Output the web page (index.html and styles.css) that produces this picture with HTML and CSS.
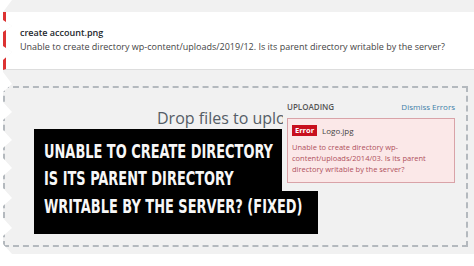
FILE: index.html
```html
<!DOCTYPE html>
<html lang="en">
<head>
    <meta charset="UTF-8">
    <meta name="viewport" content="width=device-width, initial-scale=1.0">
    <title>Unable to create directory</title>
    <link rel="stylesheet" href="styles.css">
</head>
<body>
    <div class="screen">
        <div class="topbar"></div>

        <div class="notice">
            <p class="notice-file">create account.png</p>
            <p class="notice-msg">Unable to create directory wp-content/uploads/2019/12. Is its parent directory writable by the server?</p>
        </div>

        <div class="uploader">
            <div class="drop">
                <p class="drop-text">Drop files to upload</p>

                <div class="upload-status">
                    <div class="status-head">
                        <span class="status-title">UPLOADING</span>
                        <a class="dismiss" href="#">Dismiss Errors</a>
                    </div>
                    <div class="upload-error">
                        <div class="error-row">
                            <span class="badge">Error</span>
                            <span class="filename">Logo.jpg</span>
                        </div>
                        <p class="error-msg">Unable to create directory wp-<br>content/uploads/2014/03. Is its parent<br>directory writable by the server?</p>
                    </div>
                </div>
            </div>
        </div>
    </div>

    <!-- titulo encima de la captura -->
    <div class="caption">
        <div class="caption-top">
            <span class="line">UNABLE TO CREATE DIRECTORY</span>
            <span class="line">IS ITS PARENT DIRECTORY</span>
        </div>
        <div class="caption-bottom">
            <span class="line">WRITABLE BY THE SERVER? (FIXED)</span>
        </div>
    </div>
</body>
</html>
```

FILE: styles.css
```css
body {
    margin: 0;
    width: 474px;
    height: 266px;
    overflow: hidden;
    background-color: #ffffff;
    font-family: "Open Sans", Arial, sans-serif;
    position: relative;
}
p {
    margin: 0;
}
.screen {
    height: 254px;
    background-color: #f1f1f1;
    /* borde izquierdo roto */
    clip-path: polygon(12px 0, 474px 0, 474px 254px, 12px 254px,
        3px 244px, 3px 236px, 12px 228px, 3px 218px, 3px 206px, 12px 198px,
        3px 188px, 3px 176px, 12px 168px, 3px 158px, 3px 148px, 12px 140px,
        3px 130px, 3px 120px, 12px 112px, 3px 102px, 3px 92px, 12px 84px,
        3px 72px, 3px 60px, 12px 52px, 3px 46px, 3px 32px, 12px 26px,
        3px 20px, 3px 12px);
}
.topbar {
    height: 12px;
}
.notice {
    height: 43px;
    margin-left: 3px;
    padding: 14px 0 0 14px;
    background-color: #ffffff;
    border-left: 3px solid #dc3232;
    border-bottom: 1px solid #dddddd;
}
.notice-file {
    font-size: 9px;
    line-height: 14px;
    font-weight: 600;
    color: #23282d;
}
.notice-msg {
    font-size: 9px;
    line-height: 14px;
    color: #444444;
}
.uploader {
    padding: 16px 6px 0 3px;
}
.drop {
    position: relative;
    height: 157px;
    border: 2px dashed #b4b9be;
}
.drop-text {
    width: 126px;
    margin: 19px 0 0 152px;
    font-size: 16px;
    line-height: 22px;
    color: #555d66;
    white-space: nowrap;
    overflow: hidden;
}
.upload-status {
    position: absolute;
    left: 279px;
    top: 12px;
    width: 168px;
    padding: 0 6px 0 3px;
}
.status-head {
    display: flex;
    justify-content: space-between;
    font-size: 8px;
    line-height: 14px;
}
.status-title {
    font-weight: 600;
    color: #555555;
}
.dismiss {
    color: #3f7fa8;
    text-decoration: none;
}
.upload-error {
    margin-top: 4px;
    height: 53px;
    padding: 6px 4px 4px;
    background-color: #fbe8e8;
    border: 1px solid #d9a3a8;
}
.error-row {
    display: flex;
    align-items: center;
    gap: 5px;
}
.badge {
    padding: 0 3px;
    font-size: 7.5px;
    line-height: 11px;
    font-weight: 700;
    color: #ffffff;
    background-color: #c8101e;
}
.filename {
    font-size: 8px;
    color: #444444;
}
.error-msg {
    margin-top: 6px;
    font-size: 7.5px;
    line-height: 11px;
    color: #b0505c;
}
.caption {
    position: absolute;
    left: 34px;
    top: 129px;
    font-family: "DejaVu Sans Condensed", "DejaVu Sans", sans-serif;
    font-weight: 700;
    font-size: 20px;
    color: #f7f7f7;
}
.caption-top {
    width: 238px;
    height: 53px;
    padding: 9px 0 0 10px;
    background-color: #000000;
}
.caption-bottom {
    width: 274px;
    height: 41px;
    padding: 2px 0 0 10px;
    background-color: #000000;
}
.line {
    display: block;
    height: 27px;
    line-height: 27px;
    white-space: nowrap;
    transform: scaleX(0.72);
    transform-origin: left center;
}
```
